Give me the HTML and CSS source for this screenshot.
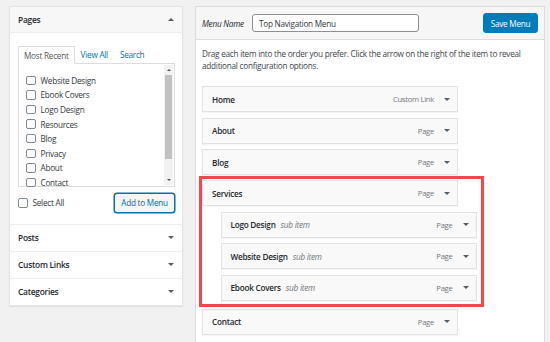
FILE: index.html
```html
<!DOCTYPE html>
<html lang="en">
<head>
<meta charset="utf-8">
<title>Menus</title>
<link rel="stylesheet" href="styles.css">
</head>
<body>
<div class="page">
  <aside class="side">
    <section class="acc">
      <div class="acc-head head-open"><h3 class="acc-title">Pages</h3><span class="tri tri-up"></span></div>
      <div class="acc-body">
        <ul class="tabs">
          <li class="tab tab-active">Most Recent</li>
          <li class="tab">View All</li>
          <li class="tab">Search</li>
        </ul>
        <div class="listbox">
          <ul class="checklist">
            <li class="check-item"><span class="cb"></span>Website Design</li>
            <li class="check-item"><span class="cb"></span>Ebook Covers</li>
            <li class="check-item"><span class="cb"></span>Logo Design</li>
            <li class="check-item"><span class="cb"></span>Resources</li>
            <li class="check-item"><span class="cb"></span>Blog</li>
            <li class="check-item"><span class="cb"></span>Privacy</li>
            <li class="check-item"><span class="cb"></span>About</li>
            <li class="check-item"><span class="cb"></span>Contact</li>
          </ul>
          <div class="scrollbar">
            <span class="sb-arrow sb-up"></span>
            <span class="sb-thumb"></span>
            <span class="sb-arrow sb-down"></span>
          </div>
        </div>
        <div class="actions">
          <label class="select-all"><span class="cb"></span>Select All</label>
          <button class="btn btn-secondary">Add to Menu</button>
        </div>
      </div>
    </section>
    <section class="acc"><div class="acc-head"><h3 class="acc-title">Posts</h3><span class="tri tri-down"></span></div></section>
    <section class="acc"><div class="acc-head"><h3 class="acc-title">Custom Links</h3><span class="tri tri-down"></span></div></section>
    <section class="acc acc-last"><div class="acc-head"><h3 class="acc-title">Categories</h3><span class="tri tri-down"></span></div></section>
  </aside>

  <main class="menu-panel">
    <header class="menu-head">
      <label class="menu-label">Menu Name</label>
      <input class="menu-input" type="text" value="Top Navigation Menu">
      <button class="btn btn-primary">Save Menu</button>
    </header>
    <div class="menu-body">
      <p class="desc">Drag each item into the order you prefer. Click the arrow on the right of the item to reveal additional configuration options.</p>
      <div class="items">
        <div class="item"><span class="item-title">Home</span><span class="item-type">Custom Link</span><span class="tri tri-down item-arrow"></span></div>
        <div class="item"><span class="item-title">About</span><span class="item-type">Page</span><span class="tri tri-down item-arrow"></span></div>
        <div class="item"><span class="item-title">Blog</span><span class="item-type">Page</span><span class="tri tri-down item-arrow"></span></div>
        <div class="highlight">
          <div class="item"><span class="item-title">Services</span><span class="item-type">Page</span><span class="tri tri-down item-arrow"></span></div>
          <div class="item sub"><span class="item-title">Logo Design</span><span class="item-sub">sub item</span><span class="item-type">Page</span><span class="tri tri-down item-arrow"></span></div>
          <div class="item sub"><span class="item-title">Website Design</span><span class="item-sub">sub item</span><span class="item-type">Page</span><span class="tri tri-down item-arrow"></span></div>
          <div class="item sub"><span class="item-title">Ebook Covers</span><span class="item-sub">sub item</span><span class="item-type">Page</span><span class="tri tri-down item-arrow"></span></div>
        </div>
        <div class="item"><span class="item-title">Contact</span><span class="item-type">Page</span><span class="tri tri-down item-arrow"></span></div>
      </div>
    </div>
  </main>
</div>
</body>
</html>
```

FILE: styles.css
```css
* { box-sizing: border-box; }
html, body { margin: 0; padding: 0; }
body {
  background: #f1f1f1;
  font-family: "Open Sans", "Noto Sans", sans-serif;
  font-size: 8.2px;
  letter-spacing: -0.25px;
  color: #23282d;
  height: 342px;
  overflow: hidden;
}
ul { list-style: none; margin: 0; padding: 0; }
h3 { margin: 0; font-size: 8.4px; font-weight: 600; }
p { margin: 0; }

.page {
  display: flex;
  align-items: flex-start;
  gap: 12px;
  padding: 6px 0 0 9px;
}

/* ---------- left column ---------- */
.side {
  width: 174px;
  background: #fff;
  border: 1px solid #e2e4e7;
  box-shadow: 0 1px 1px rgba(0,0,0,.06);
}
.acc { border-bottom: 1px solid #eeeeee; }
.acc-last { border-bottom: 0; }
.acc-head {
  height: 26px;
  display: flex;
  align-items: center;
  justify-content: space-between;
  padding: 0 8px 0 8px;
  color: #23282d;
}
.head-open { background: #f7f7f7; border-bottom: 1px solid #eeeeee; }
.acc-title { color: #23282d; }

.tri {
  width: 0; height: 0;
  border-left: 3px solid transparent;
  border-right: 3px solid transparent;
}
.tri-down { border-top: 3.5px solid #555d66; }
.tri-up { border-bottom: 3.5px solid #555d66; }

.acc-body { padding: 13px 7px 11px 8px; }

.tabs { display: flex; align-items: flex-end; }
.tab {
  height: 18px;
  line-height: 17px;
  padding: 0 6px;
  color: #0073aa;
  margin-bottom: -1px;
  position: relative;
}
.tab-active {
  color: #555;
  background: #fff;
  border: 1px solid #dddddd;
  border-bottom-color: #fff;
  padding: 0 5px;
  z-index: 1;
}

.listbox {
  height: 124px;
  border: 1px solid #dddddd;
  display: flex;
  justify-content: space-between;
  padding: 1px 1px 1px 7px;
}
.checklist { padding-top: 8px; }
.check-item {
  height: 14.6px;
  display: flex;
  align-items: center;
  gap: 5px;
  color: #32373c;
}
.cb {
  width: 9.5px;
  height: 9.5px;
  border: 1px solid #7e8993;
  border-radius: 2px;
  background: #fff;
  flex: none;
}
.scrollbar {
  width: 9px;
  background: #f1f1f1;
  display: flex;
  flex-direction: column;
  align-items: center;
}
.sb-arrow {
  width: 0; height: 0;
  border-left: 2.5px solid transparent;
  border-right: 2.5px solid transparent;
  margin: 4px 0;
}
.sb-up { border-bottom: 2.5px solid #505050; }
.sb-down { border-top: 2.5px solid #505050; margin-top: auto; margin-bottom: 4px; }
.sb-thumb { width: 7px; height: 84px; background: #c1c1c1; }

.actions {
  display: flex;
  align-items: center;
  justify-content: space-between;
  margin-top: 6px;
}
.select-all { display: flex; align-items: center; gap: 5px; color: #32373c; }

.btn {
  font-family: inherit;
  font-size: 8.2px;
  letter-spacing: -0.25px;
  height: 19.5px;
  border-radius: 3px;
  cursor: pointer;
  padding: 0;
  white-space: nowrap;
  text-align: center;
}
.btn-secondary {
  width: 61px;
  background: #f3f5f6;
  border: 1px solid #0071a1;
  color: #0071a1;
  box-shadow: 0 0 0 0.5px #0071a1;
}
.btn-primary {
  width: 55px;
  background: #007cba;
  border: 1px solid #007cba;
  color: #fff;
  margin-left: auto;
}

/* ---------- right panel ---------- */
.menu-panel {
  width: 350px;
  height: 340px;
  background: #fff;
  border: 1px solid #dcdcde;
  box-shadow: 0 1px 1px rgba(0,0,0,.04);
}
.menu-head {
  height: 33px;
  display: flex;
  align-items: center;
  padding: 0 6px 0 6px;
  background: #f6f6f6;
  border-bottom: 1px solid #dddddd;
}
.menu-label { font-style: italic; color: #23282d; width: 50px; }
.menu-input {
  width: 167px;
  height: 18.5px;
  border: 1px solid #8c8f94;
  border-radius: 3px;
  padding: 0 6px;
  font-family: inherit;
  font-size: 8.2px;
  letter-spacing: -0.25px;
  color: #32373c;
  background: #fff;
}

.menu-body { padding: 8px 6px 0 6px; }
.desc { line-height: 12px; color: #3c434a; width: 330px; }
.items { margin-top: 14px; }
.item {
  width: 256px;
  height: 26px;
  display: flex;
  align-items: center;
  padding: 0 7px 0 9px;
  background: #f9f9f9;
  border: 1px solid #e2e2e2;
  box-shadow: 0 1px 1px rgba(0,0,0,.04);
  margin-bottom: 5.5px;
}
.item-title { font-weight: 600; color: #23282d; }
.item-sub { font-style: italic; color: #72777c; margin-left: 5px; }
.item-type { margin-left: auto; color: #72777c; font-size: 7.6px; }
.item-arrow { margin-left: 10px; }
.sub { margin-left: 18.5px; }

.highlight {
  width: 285px;
  margin: -4.5px 0 2.3px -3.4px;
  border: 3px solid #f5474b;
  padding: 1px 0 3px 0.4px;
}
.highlight .item:last-child { margin-bottom: 0; }
```
